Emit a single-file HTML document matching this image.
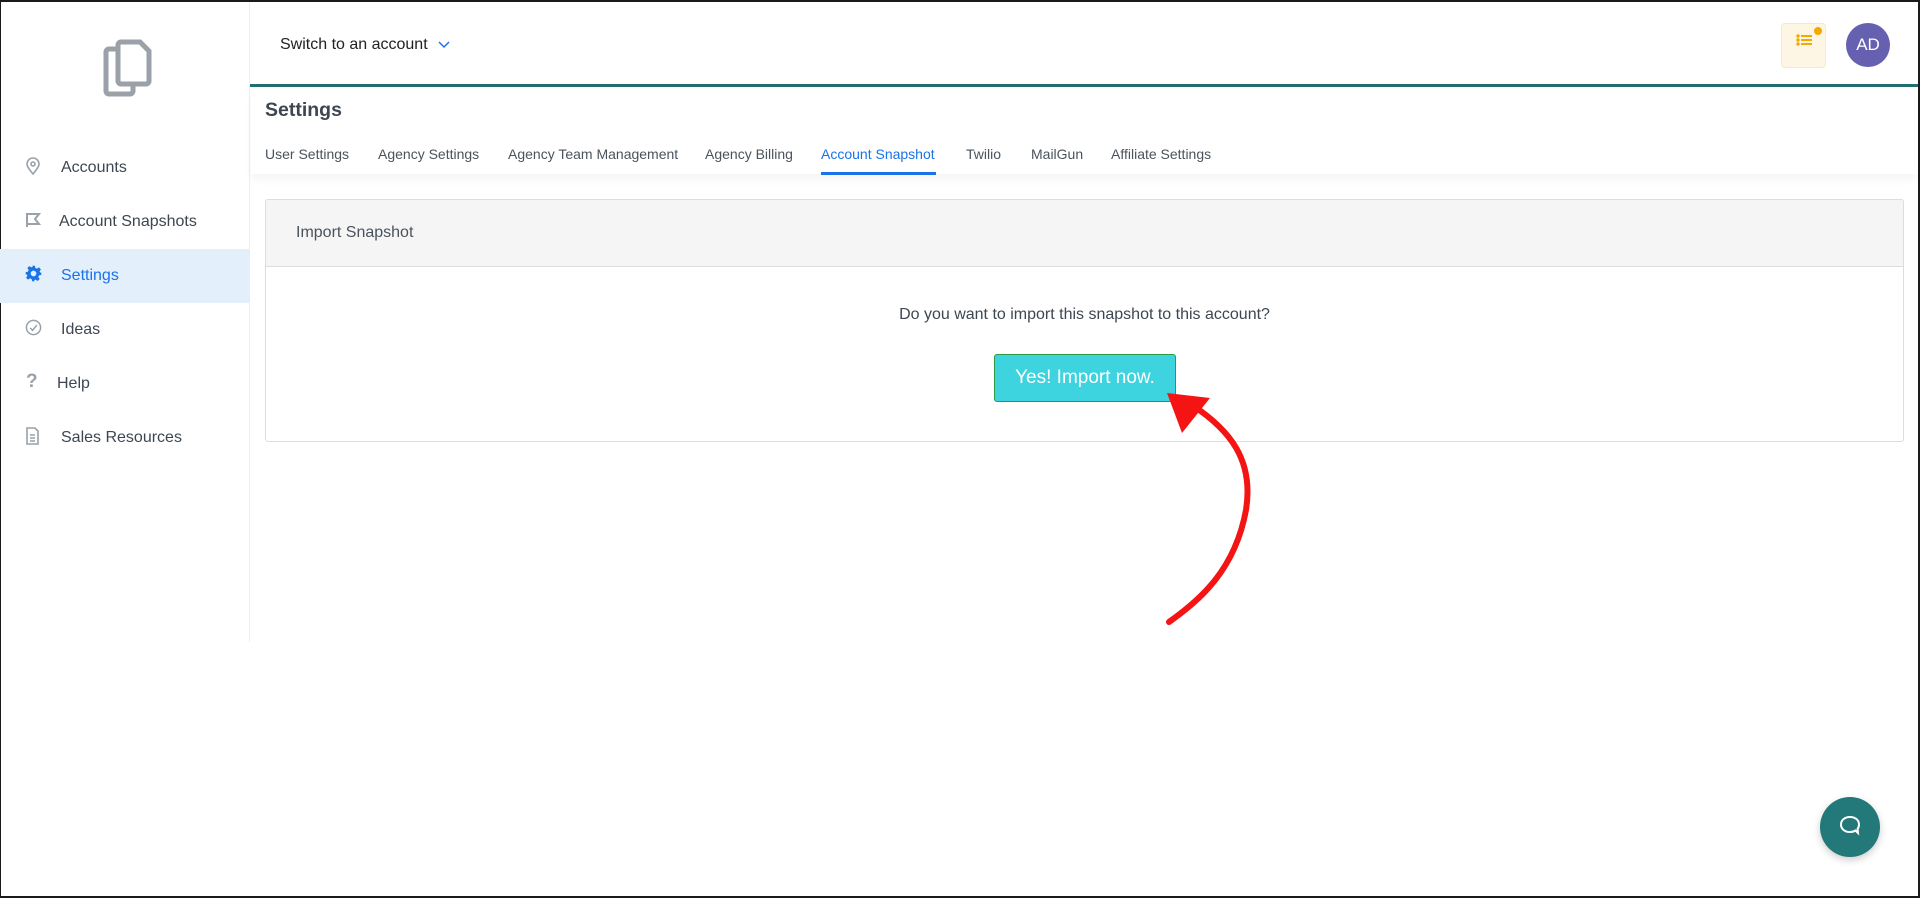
<!DOCTYPE html>
<html><head><meta charset="utf-8"><style>
*{box-sizing:border-box;margin:0;padding:0}
html,body{width:1920px;height:898px;overflow:hidden;background:#fff;font-family:"Liberation Sans",sans-serif}
.frame{position:absolute;inset:0;border:2px solid #1a1a1a;border-left:1px solid #1a1a1a}
.side{position:absolute;left:0;top:2px;width:250px;height:640px;border-right:1px solid #eee}
.nav{position:absolute;left:0;width:250px;height:54px;font-size:16px;color:#3d4752}
.nav span{position:absolute;left:61px;top:18px}
.nav svg{position:absolute;left:25px;top:16px}
.hdr{position:absolute;left:250px;top:2px;right:2px;height:85px;border-bottom:3px solid #1f6f70}
.t{position:absolute;font-size:14px;color:#4a535c;top:146px}
</style></head><body>
<div class="frame"></div>
<div class="side">
<svg style="position:absolute;left:101px;top:37px" width="52" height="58" viewBox="0 0 52 58" fill="none" stroke="#9aa1a9" stroke-width="5"><path d="M17 10 H8 a3 3 0 0 0-3 3 V52 a3 3 0 0 0 3 3 H29 a3 3 0 0 0 3-3 V45"/><path d="M20 3 H39 L48 12 V42 a3 3 0 0 1-3 3 H20 a3 3 0 0 1-3-3 V6 a3 3 0 0 1 3-3z"/></svg>
<div class="nav" style="top:139px"><svg width="16" height="18" viewBox="0 0 16 18" fill="none" stroke="#9aa1a9" stroke-width="1.6"><path d="M8 17 C3 11 2 9 2 7 a6 6 0 0 1 12 0 c0 2-1 4-6 10z"/><circle cx="8" cy="7" r="2"/></svg><span>Accounts</span></div>
<div class="nav" style="top:193px"><svg width="16" height="18" viewBox="0 0 16 18" fill="none" stroke="#9aa1a9" stroke-width="2"><path d="M2 2 V16 M2 3 H14 L10 8 L14 13 H2"/></svg><span style="left:59px">Account Snapshots</span></div>
<div class="nav" style="top:247px;background:#e3effb;color:#1a73e8"><svg width="17" height="17" viewBox="0 0 24 24" fill="#1a73e8"><path d="M10 1h4l.6 3.2 2.4 1 2.7-1.9 2.8 2.8-1.9 2.7 1 2.4L23 10v4l-3.2.6-1 2.4 1.9 2.7-2.8 2.8-2.7-1.9-2.4 1L14 23h-4l-.6-3.2-2.4-1-2.7 1.9-2.8-2.8 1.9-2.7-1-2.4L1 14v-4l3.2-.6 1-2.4-1.9-2.7 2.8-2.8 2.7 1.9 2.4-1z"/><circle cx="12" cy="12" r="4" fill="#e3effb"/></svg><span>Settings</span></div>
<div class="nav" style="top:301px"><svg width="17" height="17" viewBox="0 0 18 18" fill="none" stroke="#9aa1a9" stroke-width="1.6"><circle cx="9" cy="9" r="7.5"/><path d="M5.5 9.5 L8 12 L12.5 6.5"/></svg><span>Ideas</span></div>
<div class="nav" style="top:355px"><span style="left:26px;top:14px;font-weight:bold;color:#9aa1a9;font-size:19px">?</span><span style="left:57px">Help</span></div>
<div class="nav" style="top:409px"><svg width="15" height="18" viewBox="0 0 15 18" fill="none" stroke="#9aa1a9" stroke-width="1.6"><path d="M2 1 H10 L13 4 V17 H2z M5 8 H10 M5 11 H10 M5 14 H10"/></svg><span>Sales Resources</span></div>
</div>
<div class="hdr">
<div style="position:absolute;left:30px;top:34px;font-size:16px;color:#222">Switch to an account <svg width="12" height="8" viewBox="0 0 12 8" style="margin-left:6px"><path d="M1 1 L6 6 L11 1" fill="none" stroke="#1a73e8" stroke-width="1.5"/></svg></div>
<div style="position:absolute;left:1531px;top:21px;width:45px;height:45px;background:#fdf6e4;border:1px solid #fbe9c2;border-radius:4px">
<svg style="position:absolute;left:14px;top:10px" width="18" height="12" viewBox="0 0 18 12" fill="#f5a800"><circle cx="2" cy="2" r="1.7"/><circle cx="2" cy="6" r="1.7"/><circle cx="2" cy="10" r="1.7"/><rect x="5" y="1" width="11" height="2"/><rect x="5" y="5" width="11" height="2"/><rect x="5" y="9" width="11" height="2"/></svg>
<div style="position:absolute;right:3px;top:3px;width:8px;height:8px;border-radius:50%;background:#f5a800"></div></div>
<div style="position:absolute;left:1596px;top:21px;width:44px;height:44px;border-radius:50%;background:#6560b0;color:#fff;font-size:17px;text-align:center;line-height:44px">AD</div>
</div>
<div style="position:absolute;left:251px;top:90px;right:2px;height:84px;background:#fff;box-shadow:0 6px 8px rgba(0,0,0,0.04)"></div>
<div style="position:absolute;left:265px;top:99px;font-size:19.5px;font-weight:bold;color:#3d4752">Settings</div>
<div class="t" style="left:265px">User Settings</div>
<div class="t" style="left:378px">Agency Settings</div>
<div class="t" style="left:508px">Agency Team Management</div>
<div class="t" style="left:705px">Agency Billing</div>
<div class="t" style="left:821px;color:#1a73e8">Account Snapshot</div>
<div style="position:absolute;left:821px;top:172px;width:115px;height:3px;background:#1a73e8"></div>
<div class="t" style="left:966px">Twilio</div>
<div class="t" style="left:1031px">MailGun</div>
<div class="t" style="left:1111px">Affiliate Settings</div>
<div style="position:absolute;left:265px;top:199px;width:1639px;height:243px;border:1px solid #ddd;border-radius:3px;overflow:hidden">
<div style="height:67px;background:#f5f5f5;border-bottom:1px solid #ddd;font-size:16px;color:#4a535c;padding:24px 0 0 30px">Import Snapshot</div>
<div style="position:absolute;left:0;right:0;top:106px;text-align:center;font-size:16px;color:#3d4752">Do you want to import this snapshot to this account?</div>
<div style="position:absolute;left:728px;top:154px;width:182px;height:48px;background:#3dd3df;border:1px solid #2a9d4a;border-radius:3px;color:#fff;font-size:19px;text-align:center;line-height:45px">Yes! Import now.</div>
</div>
<svg style="position:absolute;left:0;top:0" width="1920" height="898">
<path d="M1169 622 C1200 600 1235 570 1246 510 C1254 460 1230 430 1192 405" fill="none" stroke="#f41414" stroke-width="6" stroke-linecap="round"/>
<polygon points="1167,393 1210,398 1182,433" fill="#f41414"/>
</svg>
<div style="position:absolute;left:1820px;top:797px;width:60px;height:60px;border-radius:50%;background:#23787a;box-shadow:0 3px 8px rgba(0,0,0,0.2)">
<svg style="position:absolute;left:18px;top:17px" width="24" height="24" viewBox="0 0 24 24" fill="none" stroke="#fff" stroke-width="2"><path d="M12 3 C6.5 3 3 6.3 3 10.5 C3 14.7 6.5 18 12 18 C14 18 16 17.5 17.5 16.5 L20 19 L19.6 14.8 C20.6 13.6 21 12 21 10.5 C21 6.3 17.5 3 12 3z"/></svg></div>
</body></html>
